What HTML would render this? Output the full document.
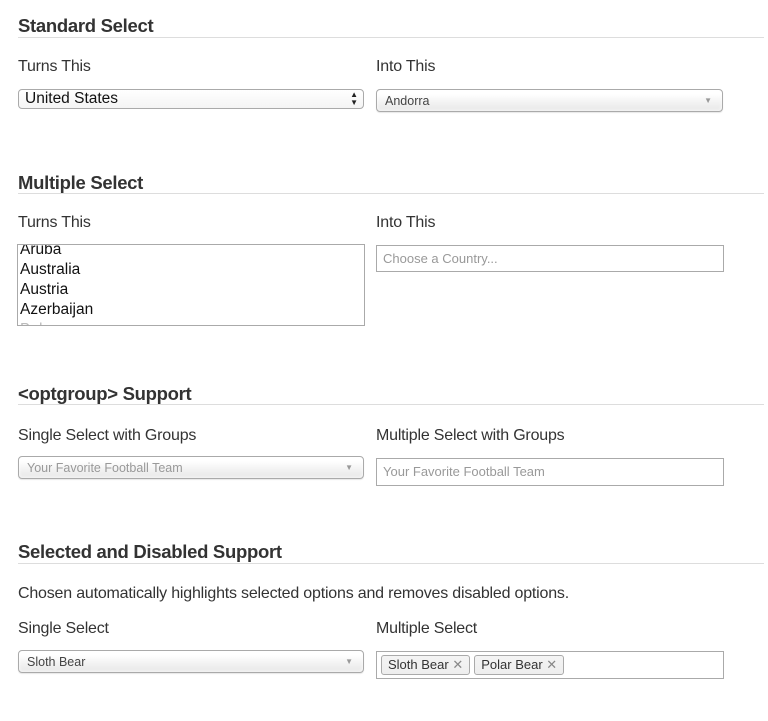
<!DOCTYPE html>
<html><head><style>
body{margin:0;width:768px;height:721px;background:#fff;font-family:"Liberation Sans",sans-serif;color:#333;position:relative;overflow:hidden}
.a{position:absolute}
h2{position:absolute;margin:0;font-size:18.5px;font-weight:bold;color:#333;left:18px;letter-spacing:-0.3px}
.ln{position:absolute;left:18px;width:746px;height:1px;background:#ddd}
.lb{position:absolute;font-size:16px;color:#333;letter-spacing:-0.2px}
.ch{position:absolute;box-sizing:border-box;border:1px solid #aaa;border-radius:4px;background:linear-gradient(#fff 20%,#f2f2f2 60%,#e8e8e8);box-shadow:0 0 3px #fff inset,0 1px 1px rgba(0,0,0,.1);font-size:12.5px;color:#444;padding-left:8px;line-height:20px}
.ch .ar{position:absolute;right:10px;top:0;font-size:8px;color:#999}
.mu{position:absolute;box-sizing:border-box;border:1px solid #aaa;background:#fff;font-size:13px;color:#999;padding-left:6px}
.tag{display:inline-block;border:1px solid #aaa;border-radius:3px;background:linear-gradient(#f4f4f4,#eee);color:#333;padding:0 6px;line-height:18px;margin-right:4px;font-size:13px}
</style></head><body>
<h2 style="top:15px">Standard Select</h2><div class="ln" style="top:37px"></div>
<div class="lb" style="left:18px;top:58px">Turns This</div>
<div class="lb" style="left:376px;top:58px">Into This</div>
<div class="a" style="left:18px;top:89px;width:346px;height:20px;box-sizing:border-box;border:1px solid #aaa;border-radius:4px;background:linear-gradient(#fff,#f4f4f4);font-size:15.5px;color:#111;line-height:18px;padding-left:6px">United States<span style="position:absolute;right:5px;font-size:8px;line-height:8px;color:#222;top:1px">▲<br>▼</span></div>
<div class="ch" style="left:376px;top:89px;width:347px;height:23px;line-height:22px">Andorra<span class="ar">▼</span></div>

<h2 style="top:172px">Multiple Select</h2><div class="ln" style="top:193px"></div>
<div class="lb" style="left:18px;top:214px">Turns This</div>
<div class="lb" style="left:376px;top:214px">Into This</div>
<div class="a" style="left:17px;top:244px;width:348px;height:82px;box-sizing:border-box;border:1px solid #aaa;overflow:hidden;font-size:15.5px;color:#111;line-height:20px;padding-left:2px"><div style="margin-top:-5px">Aruba<br>Australia<br>Austria<br>Azerbaijan<br><span style="color:#bbb">Bahamas</span></div></div>
<div class="mu" style="left:376px;top:245px;width:348px;height:27px;line-height:25px">Choose a Country...</div>

<h2 style="top:383px">&lt;optgroup&gt; Support</h2><div class="ln" style="top:404px"></div>
<div class="lb" style="left:18px;top:427px">Single Select with Groups</div>
<div class="lb" style="left:376px;top:427px">Multiple Select with Groups</div>
<div class="ch" style="left:18px;top:456px;width:346px;height:23px;line-height:22px;color:#999">Your Favorite Football Team<span class="ar">▼</span></div>
<div class="mu" style="left:376px;top:458px;width:348px;height:28px;line-height:26px">Your Favorite Football Team</div>

<h2 style="top:541px">Selected and Disabled Support</h2><div class="ln" style="top:563px"></div>
<div class="lb" style="left:18px;top:585px">Chosen automatically highlights selected options and removes disabled options.</div>
<div class="lb" style="left:18px;top:620px">Single Select</div>
<div class="lb" style="left:376px;top:620px">Multiple Select</div>
<div class="ch" style="left:18px;top:650px;width:346px;height:23px;line-height:22px">Sloth Bear<span class="ar">▼</span></div>
<div class="mu" style="left:376px;top:651px;width:348px;height:28px;padding-left:4px;padding-top:3px"><span class="tag">Sloth Bear <span style="color:#888">✕</span></span><span class="tag">Polar Bear <span style="color:#888">✕</span></span></div>
</body></html>
